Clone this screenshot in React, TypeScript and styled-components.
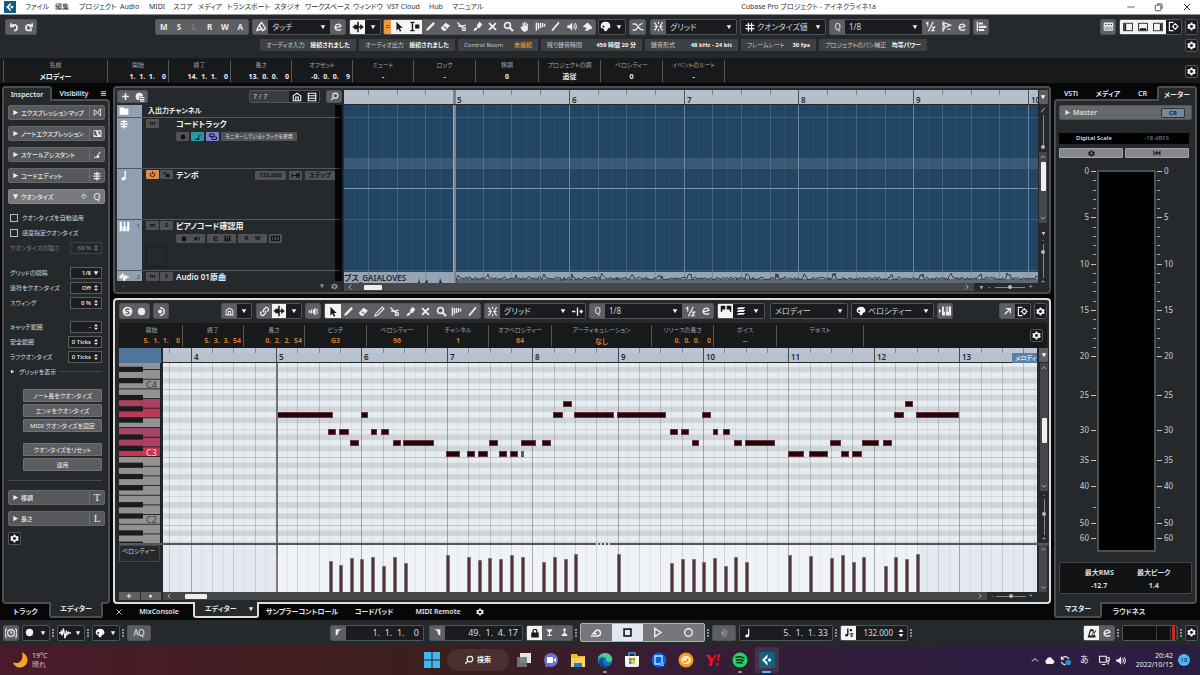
import React from 'react';
import styled, { createGlobalStyle, css } from 'styled-components';

const c = {
  panel: '#25292c',
  line: '#4c4e53',
  field: '#1b1c1f',
  info: '#18191b',
  grey: '#5d5f63',
  text: '#dcdddf',
  orange: '#cf7a2c',
};

const GlobalStyle = createGlobalStyle`
  * { box-sizing: border-box; }
  body { margin: 0; background: #070708; }
  body, button, input, select {
    font-family: "Noto Sans", "Noto Sans CJK JP", sans-serif;
    font-feature-settings: "palt";
    font-size: 7px;
    line-height: 10px;
    color: ${c.text};
  }
  button, input, select { margin: 0; padding: 0; border: 0; background: none; border-radius: 0; outline: 0; }
  select { appearance: none; }
  svg { display: block; flex: none; }
`;

/* ---------- icons ---------- */

const s = { fill: 'none', stroke: 'currentColor', strokeWidth: 2 } as const;
const f = { fill: 'currentColor' } as const;

const glyphs: Record<string, React.ReactNode> = {
  undo: <g {...s} strokeWidth={2.600}><path d="M3 2v5h5" /><path d="M3.500 7C6 3 13 4 13 9c0 3-2.500 4.500-5 4.500" /></g>,
  redo: <g {...s} strokeWidth={2.600}><path d="M13 2v5H8" /><path d="M12.500 7C10 3 3 4 3 9c0 3 2.500 4.500 5 4.500h3V9" /></g>,
  auto: <g {...s} strokeWidth={1.800}><path d="M2 13L6 5l3-3 5 8-4 3-4-8M2 13l8-3" /></g>,
  e: <path {...s} strokeWidth={2.200} d="M4 9.500L12.500 7C12 2 5 2.500 3.500 7.500c-1 5 5 7.500 9.500 4" />,
  autoscroll: <g {...f}><path d="M7 1h2v14H7zM1 7h14v2H1zM11 4l4.500 4L11 12zM3 5h4v6H3z" /></g>,
  arrow: <path {...f} d="M5 1v13l3-3 2 4.500 2-1L10 10h4z" />,
  range: <g {...f}><path d="M2 1h6v2H6v10h2v2H2v-2h2V3H2zM9 5h6v6H9z" /></g>,
  pencil: <path {...f} d="M1.500 14.500l1.500-4L12 1.500l2.500 2.500-9 9z" />,
  brush: <path {...s} strokeWidth={1.600} d="M1.500 14.500l1.500-4L12 1.500l2.500 2.500-9 9z" />,
  eraser: <path {...f} d="M1 10l7-7.500 6.500 4L8 14H4.500z M5 9l4 3 1-1.200-4-3z" fillRule="evenodd" />,
  scissors: <g {...s} strokeWidth={2}><path d="M2 2l7 7M14 6L7 8" /><circle cx="11.500" cy="11.500" r="2.200" /><path d="M3 7l5 1" /></g>,
  glue: <path {...f} d="M2 15l2-5 4-1-1-3 4-5 4 4-4 5-3 0-1 3z" />,
  x: <path {...s} strokeWidth={2.800} d="M3 3l10 10M13 3L3 13" />,
  zoom: <g {...s} strokeWidth={2.400}><circle cx="6.500" cy="6.500" r="4.300" /><path d="M9.500 9.500l5 5" strokeWidth={3} /></g>,
  hand: <path {...f} d="M3 8l2 1V3h1.500v4h.7V1.500h1.600V7h.7V2h1.500v5.500h.7V4H13v7c0 3-2 4.500-4.500 4.500S4.500 14 2 9z" />,
  comp: <g {...f}><path d="M1 2h2v12H1zM4 3h2v9H4zM7 3h2v7H7zM10 3h2v6h-2zM13 4h2v4h-2z" /></g>,
  line: <path {...s} strokeWidth={2.400} d="M3 14L13 2" />,
  speaker: <g><path {...f} d="M2 6h3l4-4v12l-4-4H2z" /><path {...s} strokeWidth={1.500} d="M11 5c1.500 2 1.500 4 0 6M13 3c2.500 3 2.500 7 0 10" /></g>,
  feedback: <g {...f}><path d="M1 6h2v4H1zM4 5h2v6H4zM7 6l4-4v12L7 10zM12.500 4H14v8h-1.500z" /></g>,
  paint: <path {...f} d="M1 8l7-6 6 6 1 5-2-2-5 3H4l3-4z" />,
  palette: <path {...f} d="M8 1c5 0 7 3 7 6.500 0 2-1 3-3 3-1 0-1 4-4 4.500-2 0-2-3-3-4C2 11 1 9.500 1 7.500 1 3 4 1 8 1zM5 6.500A1.500 1.500 0 1 0 5 9.500 1.500 1.500 0 0 0 5 6.500z" fillRule="evenodd" />,
  fade: <g {...s} strokeWidth={1.700}><path d="M1 4h3c4 0 4 8 11 8M1 12h3c2 0 3-2 4-4M9 6l5-3" /></g>,
  snap: <g {...s} strokeWidth={1.800}><path d="M8 1v3.500M8 11.500V15M2 2l4 6-4 6M14 2l-4 6 4 6M6 8H2M10 8h4" /></g>,
  hash: <path {...s} d="M5.500 1v14M10.500 1v14M1 5.500h14M1 10.500h14" />,
  iter: <g {...s} strokeWidth={1.800}><path d="M1.500 4L4 2v6M12 1L5 15M10 9h4l-4 5h4" /></g>,
  tri: <g {...s} strokeWidth={1.700}><path d="M3 2v12l3-5zM3 2l11 4-8 3zM9 12h5" /></g>,
  align: <g {...f}><path d="M1 1h2v14H1zM4 2h6v3H4zM4 7h11v3H4zM4 11.500h8v3H4z" /></g>,
  mixer: <g><rect {...f} x="1" y="2" width="14" height="12" rx="1" /><path d="M3 5h2M7 5h2M11 5h2" stroke="#333" strokeWidth="1.500" /><path d="M2 8h12v5H2z" fill="#9db6cf" /></g>,
  zoneL: <g><rect {...s} strokeWidth={1.400} x="1" y="2" width="14" height="12" /><path {...f} d="M2 3h3v10H2z" /></g>,
  zoneB: <g><rect {...s} strokeWidth={1.400} x="1" y="2" width="14" height="12" /><path {...f} d="M3 10h10v3H3z" /></g>,
  zoneR: <g><rect {...s} strokeWidth={1.400} x="1" y="2" width="14" height="12" /><path {...f} d="M11 3h3v10h-3z" /></g>,
  setup: <g {...s} strokeWidth={1.700}><path d="M8 2H2v12h6" /><circle cx="10.500" cy="8" r="3" /><path d="M10.500 3v2M10.500 11v2M5.500 8h2M13.500 8h2" /></g>,
  gear: <path {...f} fillRule="evenodd" d="M6.500 1h3l.5 2 2 1.200 2-.6 1.500 2.600L14 8l1.500 1.800-1.500 2.600-2-.6L10 13l-.5 2h-3L6 13l-2-1.200-2 .6L.5 9.800 2 8 .5 6.200 2 3.600l2 .6L6 3zM8 5.400A2.600 2.600 0 1 0 8 10.600 2.600 2.600 0 0 0 8 5.400z" />,
  down: <path {...f} d="M2 3h12L8 14z" />,
  right: <path {...f} d="M3 2l11 6-11 6z" />,
  plus: <path {...s} strokeWidth={2.800} d="M8 2v12M2 8h12" />,
  presets: <g {...f}><path d="M7 1a6 6 0 1 0 0 12V7h6A6 6 0 0 0 7 1z" /><path d="M8 8h7v2H8zM8 11h7v2H8zM8 14h7v1.500H8z" /></g>,
  house: <g {...s} strokeWidth={1.800}><path d="M2 14V6l6-4 6 4v8zM6 8v5M10 8v5M5 8h6" /></g>,
  list: <g {...s} strokeWidth={1.800}><path d="M2 2h12v12H2zM2 6h12M2 10h12" /></g>,
  find: <g {...s}><circle cx="9.500" cy="6.500" r="4.500" /><path d="M6.500 9.500L2 14" /></g>,
  folder: <path {...f} d="M1 2h6l1.500 2H15v10H1z" />,
  chord: <g {...f}><path d="M7 1h2v14H7zM3 3h10v2H3zM2 7h12v2H2zM3 11h10v2H3z" /></g>,
  note: <path {...f} d="M8 1h2v11c0 2-2 3-4 3s-3-2-2-3.500S7 10 8 10z" />,
  piano: <path {...f} d="M1 1h3v7h1v7H1zM6 8h1V1h2v7h1v7H6zM12 1h3v14h-4V8h1z" />,
  wave: <path {...s} strokeWidth={1.800} d="M0 8h2l1-2 1 5 2-9 2 13 2-10 1 5 2-3 1 1h2" />,
  bow: <g {...s} strokeWidth={1.600}><path d="M2 3v10l6-5zM8 8l5-6v12zM13 2l2-1" /></g>,
  noteExp: <path {...f} fillRule="evenodd" d="M1 2h14v12H1zM2 3v7l5 3h1L5 4zM8 4l5 8V5z" />,
  scale: <g><path {...s} d="M2 13h4l7-10" strokeWidth={1.800} /><circle {...f} cx="9" cy="12" r="2.200" /></g>,
  mini: <path {...s} strokeWidth={1.700} d="M8 2L4 7l4 6 5-5-2-5-4 3" />,
  dot: <circle {...f} cx="8" cy="8" r="6.500" />,
  solo: <g><circle {...f} cx="8" cy="8" r="7" /><path d="M11 5.500C9.500 3.500 5 4 5.500 6.500 6 8.500 10.500 7.500 10.500 9.800 10 12.500 6 12 5 10.500" fill="none" stroke="#55575b" strokeWidth="1.800" /></g>,
  input: <g><path {...s} strokeWidth={2.200} d="M6 2.500a6 5.500 0 1 1 0 11" /><circle {...f} cx="6" cy="8" r="3" /></g>,
  link: <g {...s}><path d="M7 9a3 3 0 0 1 0-4l2.500-2.500a3 3 0 0 1 4 4L12 8M9 7a3 3 0 0 1 0 4l-2.500 2.500a3 3 0 0 1-4-4L4 8" /></g>,
  nudge: <g {...s}><path d="M8 2v12M0 8h5M11 8h5M13.500 5.500v5" /></g>,
  parts: <g {...f}><path d="M1 1h6v5H3v3H1zM9 1h6v8h-2V6H9z" /></g>,
  layers: <g {...f}><path d="M4 2h11l-3 3H1zM4 6.500h11l-3 3H1zM4 11h11l-3 3H1z" /></g>,
  keysIn: <g {...f}><path d="M0 5l3 3-3 3zM4 2h2.500v7H8v5H4zM9 2h1v7h1V2h1v7h1V2h3v12H9z" /></g>,
  expand: <path {...s} strokeWidth={2.400} d="M3 13L13 3M5 3h8v8" />,
  rewind: <path {...f} d="M1 3h2v10H1zM9 3v10L3.500 8zM15 3v10L9.500 8z" />,
  menu: <path {...s} d="M2 4h12M2 8h12M2 12h12" />,
  power: <g {...s}><path d="M5 4a5 5 0 1 0 6 0M8 1v6" /></g>,
  lockOpen: <path {...f} d="M6 7h9v7H6V6C6 3 2 3 2 6v2H0V6c0-5 8-5 8 0z" />,
  lock: <path {...f} fillRule="evenodd" d="M2 7h2V5c0-5 8-5 8 0v2h2v8H2zM6 7h4V5c0-2.500-4-2.500-4 0z" />,
  link2: <g {...s}><path d="M2 4v8M2 8h7M10 5h5v6h-5zM10 8h5" /></g>,
  blocks: <g {...s} strokeWidth={1.800}><path d="M1 2h9v5H1zM6 7v6h9V8h-5" /></g>,
  bars: <g {...s}><path d="M1 4h14v8H1zM5 4v8M10 4v8" /></g>,
  locL: <path {...f} d="M3 2h11L9 5 6 13H3z" />,
  locR: <path {...f} d="M13 2H2l5 3 3 8h3z" />,
  punchIn: <path {...f} d="M3 2h10v2L9 8v4h3v2H4v-2h3V8L3 4z" />,
  punchOut: <path {...f} d="M8 1a2 2 0 0 1 1 4v4l4 3v2H3v-2l4-3V5a2 2 0 0 1 1-4z" />,
  cycle: <path {...s} d="M1 12h9c6 0 5-9-1-8L4 9h5" strokeWidth={2} />,
  stop: <rect {...s} x="3" y="3" width="10" height="10" strokeWidth={2.400} />,
  play: <path {...s} d="M4 2l9 6-9 6z" />,
  rec: <circle {...s} cx="8" cy="8" r="5.500" />,
  clock: <g {...s} strokeWidth={1.600}><circle cx="8" cy="8" r="4.500" /><path d="M8 5v3h2M2 2C-.5 6 0 11 2 14M14 2c2.500 4 2 9 0 12" /></g>,
  tempo: <g {...f}><path d="M6 2h2v9c0 3-5 4-5 1 0-2 2-2 3-2zM10 3h3v3h-3zM10 9h5v2h-5zM11 12h3v2h-3z" /></g>,
  metro: <path {...f} fillRule="evenodd" d="M5 2h5l4 13H1zM6 5l-2 7h3l3-6-1-1zM8 12l6-9 1 1-5 8z" />,
  updown: <g {...f}><path d="M8 0l5 6H3zM8 16l5-6H3z" /></g>,
  chevL: <path {...s} d="M11 2L5 8l6 6" />,
  chevR: <path {...s} d="M5 2l6 6-6 6" />,
  chevU: <path {...s} d="M2 11l6-6 6 6" />,
  chevD: <path {...s} d="M2 5l6 6 6-6" />,
  min: <path {...s} strokeWidth={1.200} d="M2 8h12" />,
  restore: <g {...s} strokeWidth={1.400}><rect x="2" y="5" width="9" height="9" rx="2" /><path d="M5 3h6a2 2 0 0 1 2 2v6" /></g>,
  close: <path {...s} strokeWidth={1.600} d="M3 3l10 10M13 3L3 13" />,
};

const Icon = ({ n, size = 12 }: { n: string; size?: number }) => (
  <svg width={size} height={size} viewBox="0 0 16 16" aria-hidden="true">{glyphs[n]}</svg>
);

/* ---------- shared parts ---------- */

const Page = styled.div`
  min-height: 100vh;
  display: flex;
  flex-direction: column;
  overflow: hidden;
`;

const Spring = styled.span`flex: 1 1 0;`;

const tones = {
  grey: css`background: ${c.grey}; color: #ececec;`,
  dark: css`background: ${c.field}; color: #f2f2f2;`,
  light: css`background: #f4f4f4; color: #17181a;`,
  orange: css`background: #f09a3e; color: #17181a;`,
};
type Tone = keyof typeof tones;

const Group = styled.div<{ $w: number; $gap?: number }>`
  display: flex;
  flex: none;
  width: ${p => p.$w}px;
  height: 16px;
  margin-left: ${p => p.$gap ?? 3}px;
  border: 1px solid #505358;
  border-radius: 2px;
  overflow: hidden;
`;

const Cell = styled.button<{ $w?: number; $tone?: Tone }>`
  flex: ${p => (p.$w ? `0 0 ${p.$w}px` : '1 1 0')};
  min-width: 0;
  display: flex;
  align-items: center;
  justify-content: center;
  font-size: 8px;
  ${p => tones[p.$tone ?? 'grey']}
`;

const LetterCell = styled(Cell)<{ $off?: boolean }>`
  font-weight: 700;
  ${p => p.$off && 'color: #808286;'}
`;

const SelectBox = styled.span`
  flex: 1 1 0;
  min-width: 0;
  display: flex;
  align-items: center;
  gap: 2px;
  padding: 0 4px;
  background: ${c.field};
  color: #f2f2f2;
  select { flex: 1 1 0; min-width: 0; width: 0; height: 14px; font-size: 8px; color: #d4d6d8; }
`;

const Picker = ({ label, value, icon }: { label: string; value: string; icon?: string }) => (
  <SelectBox>
    {icon && <Icon n={icon} size={10} />}
    <select aria-label={label}><option>{value}</option></select>
    <Icon n="down" size={6} />
  </SelectBox>
);

const SquareButton = styled.button`
  width: 13px;
  height: 13px;
  flex: none;
  display: flex;
  align-items: center;
  justify-content: center;
  border: 1px solid #505358;
  border-radius: 2px;
  background: #191a1c;
  color: #f0f0f0;
`;

/* ---------- menu bar ---------- */

const MenuBar = styled.header`
  height: 15px;
  display: flex;
  align-items: center;
  background: #fff;
  border-bottom: 1px solid #8f9193;
  padding: 0 8px 0 4px;
  color: #333;
  svg { color: #333; }
`;
const Menus = styled.nav`display: flex; flex: 1 1 0; padding-left: 9px;`;
const MenuItem = styled.button<{ $w: number }>`
  width: ${p => p.$w}px;
  flex: none;
  text-align: left;
  white-space: nowrap;
  color: #333;
`;
const Title = styled.h1`margin: 0; font-size: 7px; font-weight: 400; white-space: nowrap;`;
const WindowButtons = styled.div`
  width: 316px;
  display: flex;
  justify-content: flex-end;
  gap: 18px;
`;
const Logo = styled.span`
  width: 12px; height: 12px; background: #145c80; display: flex; align-items: center; justify-content: center;
`;

const CubaseMark = ({ size }: { size: number }) => (
  <svg width={size} height={size} viewBox="0 0 16 16" aria-hidden="true">
    <path d="M9 1L2 8l7 7v-4L6 8l3-3z" fill="#fff" /><path d="M11 5.500l3 2.500-3 2.500L8.500 8z" fill="#fff" />
  </svg>
);

const menus: [string, number][] = [
  ['ファイル', 30], ['編集', 24], ['プロジェクト', 41], ['Audio', 29], ['MIDI', 24], ['スコア', 25], ['メディア', 29],
  ['トランスポート', 47], ['スタジオ', 31], ['ワークスペース', 48], ['ウィンドウ', 34], ['VST Cloud', 42], ['Hub', 23], ['マニュアル', 40],
];

/* ---------- project toolbar ---------- */

const Toolbar = styled.div<{ $h: number; $pad: string }>`
  height: ${p => p.$h}px;
  flex: none;
  display: flex;
  align-items: center;
  padding: ${p => p.$pad};
  background: ${c.panel};
`;

const Chips = styled.div`
  display: flex;
  align-items: center;
  gap: 3px;
  flex: 1 1 0;
  padding-left: 256px;
`;
const Chip = styled.button<{ $w: number; $warn?: boolean }>`
  width: ${p => p.$w}px;
  height: 12px;
  flex: none;
  display: flex;
  align-items: center;
  justify-content: space-between;
  padding: 0 6px;
  background: #3d4144;
  color: #c6c8ca;
  font-size: 6px;
  white-space: nowrap;
  b { color: ${p => (p.$warn ? '#e08a33' : '#f2f2f2')}; }
`;
const chips: [string, string, number][] = [
  ['オーディオ入力', '接続されました', 96], ['オーディオ出力', '接続されました', 96], ['Control Room', '未接続', 80],
  ['残り録音時間', '459 時間 20 分', 101], ['録音形式', '48 kHz - 24 bit', 93], ['フレームレート', '30 fps', 75],
  ['プロジェクトのパン補正', '均等パワー', 108],
];

const InfoLine = styled.div`
  height: 25px;
  flex: none;
  display: flex;
  align-items: center;
  background: ${c.info};
  padding: 2px 2px 1px 3px;
`;
const InfoCell = styled.label<{ $w: number; $num?: boolean; $accent?: boolean }>`
  width: ${p => p.$w}px;
  height: 22px;
  flex: none;
  display: flex;
  flex-direction: column;
  border-right: 1px solid #55585b;
  text-align: center;
  white-space: nowrap;
  span { font-size: 6px; line-height: 10px; color: #a0a2a5; }
  input {
    width: 100%;
    height: 12px;
    padding-right: ${p => (p.$num ? 2 : 0)}px;
    font-size: 7px;
    font-weight: 700;
    text-align: ${p => (p.$num ? 'right' : 'center')};
    color: ${p => (p.$accent ? c.orange : '#ececec')};
  }
`;
const InfoStart = styled.span`width: 1px; height: 22px; background: #55585b;`;

const Fields = ({ items, accent }: { items: [string, string, number, boolean?][]; accent?: boolean }) => (
  <>
    {items.map(([label, value, w, num]) => (
      <InfoCell key={label} $w={w} $num={num} $accent={accent}>
        <span>{label}</span>
        <input readOnly value={value} />
      </InfoCell>
    ))}
  </>
);

const projectInfo: [string, string, number, boolean?][] = [
  ['名前', 'メロディー', 104], ['開始', '1.  1.  1.    0', 61, true], ['終了', '14.  1.  1.    0', 62, true],
  ['長さ', '13.  0.  0.    0', 61, true], ['オフセット', '-0.  0.  0.    9', 61, true], ['ミュート', '-', 61], ['ロック', '-', 62],
  ['移調', '0', 63], ['プロジェクトの調', '追従', 62], ['ベロシティー', '0', 62], ['イベントのルート', '-', 62],
];

/* ---------- zones ---------- */

const Workspace = styled.main`
  flex: 1 1 auto;
  display: grid;
  grid-template-columns: 108px minmax(0, 1fr) 143px;
  gap: 3px;
  padding: 3px 3px 0 2px;
`;
const Zone = styled.section`display: flex; flex-direction: column; min-width: 0;`;
const Panel = styled.div<{ $active?: boolean; $fill?: boolean }>`
  border: 2px solid ${p => (p.$active ? '#dcdcdc' : c.line)};
  border-radius: 4px;
  background: ${c.panel};
  ${p => p.$fill && 'flex: 1 1 auto;'}
  min-width: 0;
  display: flex;
  flex-direction: column;
`;
const Tabs = styled.div<{ $bottom?: boolean }>`
  height: ${p => (p.$bottom ? 16 : 13)}px;
  flex: none;
  display: flex;
  align-items: flex-start;
`;
const Tab = styled.button<{ $w: number; $on?: boolean; $bottom?: boolean; $active?: boolean; $start?: boolean }>`
  width: ${p => p.$w}px;
  height: 15px;
  flex: none;
  font-size: 7px;
  font-weight: 600;
  color: #e4e4e4;
  white-space: nowrap;
  position: relative;
  z-index: 1;
  display: flex;
  align-items: center;
  justify-content: ${p => (p.$start ? 'space-between' : 'center')};
  padding: ${p => (p.$start ? '0 3px 0 10px' : '0')};
  ${p => p.$on && css`
    background: ${c.panel};
    border: 2px solid ${p.$active ? '#dcdcdc' : c.line};
    ${p.$bottom ? 'border-top: 0; border-radius: 0 0 3px 3px; margin-top: -2px; height: 16px;' : 'border-bottom: 0; border-radius: 3px 3px 0 0;'}
  `}
`;

/* ---------- inspector ---------- */

const Inspector = styled.div`
  flex: 1 1 auto;
  display: flex;
  flex-direction: column;
  padding: 4px 3px 0 4px;
`;
const Sections = styled.div`display: flex; flex-direction: column; gap: 6px;`;
const SectionHead = styled.button<{ $open?: boolean }>`
  height: 15px;
  flex: none;
  display: flex;
  align-items: center;
  gap: 2px;
  padding: 0 0 0 3px;
  border: 1px solid ${p => (p.$open ? '#85878a' : '#66686c')};
  border-radius: 2px;
  background: ${p => (p.$open ? '#77797c' : '#56585c')};
  white-space: nowrap;
  text-align: left;
  color: #ececec;
  > span { flex: 1 1 0; min-width: 0; font-size: 6px; font-weight: 500; }
`;
const SectionIcon = styled.i`
  width: 15px;
  height: 13px;
  border-left: 1px solid #6d6f73;
  display: flex;
  align-items: center;
  justify-content: center;
  font: 400 9px/13px "Noto Sans", sans-serif;
`;
const SerifIcon = styled(SectionIcon)`font: 400 11px/13px "Liberation Serif", serif;`;

const Rows = styled.div<{ $top: number }>`
  margin-top: ${p => p.$top}px;
  display: flex;
  flex-direction: column;
  padding: 0 3px 0 2px;
`;
const Row = styled.label<{ $off?: boolean }>`
  height: 15px;
  display: flex;
  align-items: center;
  font-size: 6px;
  color: ${p => (p.$off ? '#7b7e81' : '#d6d8da')};
  white-space: nowrap;
  > span:first-child { flex: 1 1 0; min-width: 0; }
`;
const Check = styled.input.attrs({ type: 'checkbox' })`
  appearance: none;
  width: 8px;
  height: 8px;
  margin-right: 4px;
  border: 1px solid #b8babc;
`;
const ValueBox = styled.span<{ $w: number; $off?: boolean }>`
  width: ${p => p.$w}px;
  height: 12px;
  display: flex;
  align-items: center;
  gap: 2px;
  padding: 0 2px 0 0;
  border: 1px solid ${p => (p.$off ? '#3f4245' : '#585b5f')};
  background: ${p => (p.$off ? 'transparent' : '#1c1e20')};
  color: ${p => (p.$off ? '#7b7e81' : '#f0f0f0')};
  input, select { flex: 1 1 0; width: 0; min-width: 0; height: 10px; text-align: right; font-size: 6px; font-weight: 500; color: inherit; }
`;
const ActionButton = styled.button`
  height: 13px;
  margin: 0 0 2px 13px;
  border: 1px solid #707276;
  border-radius: 1px;
  background: #5b5d61;
  font-size: 6px;
  color: #ececec;
`;
const Disclosure = styled.button`
  height: 15px;
  display: flex;
  align-items: center;
  gap: 4px;
  font-size: 6px;
  color: #dcdee0;
  &::after { content: ''; flex: 1; height: 1px; background: #45484b; }
`;
const Rule = styled.hr`margin: 7px 3px 9px 0; width: auto; border: 0; height: 1px; background: #484b4e;`;

const Param = ({ label, value, w = 32, off, list }: { label: string; value: string; w?: number; off?: boolean; list?: boolean }) => (
  <Row $off={off}>
    <span>{label}</span>
    <ValueBox $w={w} $off={off}>
      {list ? <select><option>{value}</option></select> : <input readOnly value={value} />}
      <Icon n={list ? 'down' : 'updown'} size={6} />
    </ValueBox>
  </Row>
);

/* ---------- arrangement ---------- */

const ArrangePanel = styled(Panel)`height: 208px; flex: none; flex-direction: row; padding: 2px 1px 1px 2px;`;
const TrackList = styled.div`width: 225px; flex: none; display: flex; flex-direction: column;`;
const TrackHead = styled.div`height: 15px; display: flex; align-items: flex-start;`;
const HeadGroup = styled(Group)`height: 13px;`;
const HeadCount = styled.span`flex: 1 1 0; background: #3b3e41; padding-left: 3px; line-height: 11px; color: #c8cacc;`;

const Track = styled.article<{ $h: number }>`
  height: ${p => p.$h}px;
  flex: none;
  display: flex;
  border-bottom: 1px solid #55585b;
  border-right: 7px solid #050505;
  overflow: hidden;
  &:last-of-type { border-bottom: 0; }
`;
const TrackColor = styled.div`
  width: 25px;
  flex: none;
  display: flex;
  justify-content: space-between;
  padding: 1px 2px 0 2px;
  background: #8fa0b1;
  color: #fff;
  small { font-size: 6px; line-height: 10px; color: #3c4855; }
`;
const TrackBody = styled.div`
  flex: 1 1 0;
  min-width: 0;
  display: grid;
  grid-template-columns: 27px 1fr;
  grid-auto-rows: min-content;
  column-gap: 3px;
  row-gap: 1px;
  padding: 0 0 0 4px;
`;
const TrackTitle = styled.div`
  display: flex;
  align-items: center;
  height: 12px;
  font-size: 8px;
  font-weight: 600;
  white-space: nowrap;
  color: #f0f0f0;
`;
const FolderTitle = styled(TrackTitle)`grid-column: 1 / -1; font-size: 7px; padding-left: 2px;`;
const Minis = styled.div<{ $shift?: boolean }>`display: flex; gap: 2px; padding-top: 1px; ${p => p.$shift && 'grid-column: 2;'}`;
const Mini = styled.button<{ $bg?: string; $w?: number }>`
  width: ${p => p.$w ?? 13}px;
  height: 9px;
  flex: none;
  display: flex;
  align-items: center;
  justify-content: space-evenly;
  background: ${p => p.$bg ?? '#505256'};
  color: #101112;
  border-radius: 1px;
  font-size: 6px;
  line-height: 9px;
  font-weight: 700;
  white-space: nowrap;
`;
const MiniText = styled(Mini)`color: #c8cacc; font-weight: 500; font-size: 5px;`;
const MS = styled(Minis)`gap: 1px;`;
const SmallValue = styled(Mini)`margin-left: 3px; &:first-of-type { margin-left: auto; }`;
const PictureSlot = styled.span`width: 21px; height: 21px; margin-top: 2px; border: 1px solid #1a1c1e;`;
const TrackFoot = styled.div`
  flex: 1 1 0; display: flex; align-items: center; justify-content: flex-end; gap: 6px; padding: 0 4px 0 5px; color: #8a8d90;
`;

const Canvas = styled.div`flex: 1 1 0; min-width: 0; display: flex; flex-direction: column; margin-left: 2px;`;
const Plot = styled.svg<{ $h: number; $grow?: boolean }>`
  width: 100%;
  height: ${p => p.$h}px;
  ${p => p.$grow && `flex: 1 0 ${p.$h}px;`}
  overflow: hidden;
  text { font-family: "Noto Sans", "Noto Sans CJK JP", sans-serif; font-size: 8px; font-weight: 600; fill: #24282c; }
`;
const HScroll = styled.div<{ $lead: number; $thumb: number }>`
  height: 8px;
  flex: none;
  display: flex;
  align-items: center;
  background: #45484a;
  padding-left: 3px;
  &::before { content: ''; order: 1; margin-left: ${p => p.$lead}px; width: ${p => p.$thumb}px; height: 5px; border-radius: 1px; background: #eee; }
`;
const HScrollEnd = styled.span`
  order: 2; margin-left: auto; height: 8px; display: flex; align-items: center; gap: 4px; color: #d0d2d4;
`;
const ZoomStrip = styled.span<{ $w: number }>`
  width: ${p => p.$w}px; height: 8px; display: flex; align-items: center; justify-content: space-around; padding: 0 3px; background: ${c.panel}; color: #a8abae; line-height: 8px;
`;
const ZoomRange = styled.input.attrs({ type: 'range', min: 0, max: 100 })<{ $v?: boolean; $len: number }>`
  appearance: none;
  ${p => (p.$v
    ? `writing-mode: vertical-lr; width: 5px; height: ${p.$len}px; background: linear-gradient(90deg, transparent 2px, #85888b 2px 3px, transparent 3px);`
    : `height: 5px; width: ${p.$len}px; background: linear-gradient(transparent 2px, #85888b 2px 3px, transparent 3px);`)}
  &::-webkit-slider-thumb { appearance: none; width: 4px; height: 4px; border-radius: 2px; background: #b8babc; }
`;
const VRail = styled.div`
  width: 10px; flex: none; display: flex; flex-direction: column; align-items: center; color: #c8cacc;
`;
const RailButton = styled.button`
  width: 9px; height: 14px; flex: none; display: flex; align-items: center; justify-content: center;
  background: ${c.grey}; border-radius: 1px; color: #fff;
`;
const VBar = styled.div<{ $lead: string; $thumb: number }>`
  width: 8px;
  flex: 1 1 0;
  display: flex;
  flex-direction: column;
  align-items: center;
  background: #45484a;
  padding: 2px 0;
  > i { flex: none; margin-top: ${p => p.$lead}; width: 5px; height: ${p => p.$thumb}px; border-radius: 1px; background: #f0f0f0; }
  > svg:last-child { margin-top: auto; }
`;
const VZoom = styled.div<{ $h: number }>`
  height: ${p => p.$h}px; flex: none; display: flex; flex-direction: column; align-items: center; justify-content: center;
  font-size: 6px; line-height: 4px; gap: 2px;
`;

const range = (n: number) => Array.from({ length: n }, (_, i) => i);

const ARR_BAR = 114.8;
const arrX = (bar: number) => Math.round(110 + (bar - 5) * ARR_BAR);

const ArrangeRuler = () => (
  <Plot $h={15} role="img" aria-label="ルーラー">
    <rect width="100%" height="14" fill="#b5bfc9" />
    {range(80).map(i => {
      const major = i % 4 === 0;
      return <rect key={i} x={arrX(4 + i / 4)} y="0" width="1" height={major ? 14 : 5} fill={major ? '#4d5358' : '#788089'} />;
    })}
    {range(20).map(i => <text key={i} x={arrX(5 + i) + 3} y="13">{5 + i}</text>)}
    <rect x="109" width="3" height="14" fill="#808386" />
  </Plot>
);

const wavePath = (() => {
  let seed = 7;
  const rnd = () => { seed = (seed * 16807) % 2147483647; return seed / 2147483647; };
  let d = 'M112 12';
  for (let x = 0; x < 1800; x += 1) {
    const beat = x % 29 < 4 ? 6 : 2;
    d += `L${112 + x} ${(8.5 - rnd() * beat - rnd() * 2).toFixed(1)}`;
  }
  return d + 'L1912 12Z';
})();

const ArrangeCanvas = () => (
  <Plot $h={178} $grow role="img" aria-label="イベントディスプレイ">
    <rect width="100%" height="100%" fill="#224566" />
    <rect y="53" width="100%" height="10" fill="#3a5873" />
    {range(160).map(i => {
      const o = i % 8 === 0 ? 0.42 : i % 2 === 0 ? 0.2 : 0.06;
      return <rect key={i} x={arrX(4 + i / 8)} width="1" height="167" fill="#cfdbe6" opacity={o} />;
    })}
    {[12, 63, 114, 165].map(y => <rect key={y} y={y} width="100%" height="1" fill="#4a6680" opacity=".7" />)}
    <rect y="83" width="100%" height="1" fill="#8192a2" />
    <rect y="167" width="100%" height="11" fill="#94a4b4" />
    {range(80).map(i => <rect key={i} x={arrX(4 + i / 4)} y="167" width="1" height="11" fill="#7f8f9f" />)}
    <g transform="translate(0 167)">
      <rect x="112" y="7" width="100%" height="4" fill="#5c6976" />
      <path d={wavePath} fill="none" stroke="#2a3036" strokeWidth=".9" />
      <path d="M74 11l1-5 1 5M81 11l2-4 1 4M95 11l1-5 2 5" fill="#2a3036" />
    </g>
    <text x="0" y="176">ブス_GAIALOVES</text>
    <rect x="109" width="3" height="178" fill="#808386" />
    <rect x="109" width="1" height="178" fill="#a5a8aa" />
  </Plot>
);

/* ---------- key editor ---------- */

const EditorPanel = styled(Panel)`margin-top: 4px; padding: 3px 0 2px 4px;`;
const EditorInfo = styled(InfoLine)`margin: 4px 2px 0 0; padding: 1px 2px 1px 2px; > button { margin-right: 2px; }`;
const EditorGrid = styled.div`
  flex: 1 1 auto;
  display: grid;
  grid-template-columns: 42px minmax(0, 1fr) 10px;
  grid-template-rows: 15px minmax(180px, 1fr) 2px 47px 8px;
  column-gap: 2px;
`;
const Corner = styled.div`background: #4f759c;`;
const Divider = styled.div`
  grid-column: 1 / -1; background: #55585b; display: flex; justify-content: center;
  &::after { content: ''; width: 14px; margin-left: 38px; border-top: 2px dotted #ccc; }
`;
const LaneHead = styled.div`
  select { width: 41px; height: 17px; border: 1px solid #44474a; font-size: 6px; padding: 0 0 6px 2px; color: #d4d6d8; }
`;
const LaneButtons = styled.div`
  display: grid; grid-template-columns: 1fr 1fr; gap: 1px;
  button { background: ${c.grey}; display: flex; align-items: center; justify-content: center; color: #eee; height: 8px; }
`;

const BAR = 85.4;
const BAR5 = 113;
const SEMI = 5.64;
const C3 = 94;
const keyX = (bar: number) => Math.round(BAR5 + (bar - 5) * BAR);
const isBlack = (n: number) => [1, 3, 6, 8, 10].includes(((n % 12) + 12) % 12);

const RulerTag = styled.text`&& { fill: #d8e4f0; font-size: 6px; font-feature-settings: "palt"; }`;

const EditorRuler = () => (
  <Plot $h={15} role="img" aria-label="エディタールーラー">
    <rect width="100%" height="5" fill="#bdc4d3" />
    <rect y="5" width="100%" height="9" fill="#b5c1cd" />
    {range(80).map(i => {
      const bar = 3.5 + i / 4;
      const major = Number.isInteger(bar);
      return <rect key={i} x={keyX(bar)} width="1" height={major ? 14 : 5} fill={major ? '#43484d' : '#7f868f'} />;
    })}
    {range(18).map(i => <text key={i} x={keyX(4 + i) + 3} y="12">{4 + i}</text>)}
    <svg x="100%" overflow="visible">
      <rect x="-25" y="5" width="25" height="10" fill="#5a80a6" />
      <RulerTag x="-22" y="12">メロディ</RulerTag>
    </svg>
  </Plot>
);

const keyTint: Record<number, string> = { 0: '#c43650', 1: '#ad4060', 2: '#a14468', 4: '#bb3a55', 5: '#ab4060' };
const KeyName = styled.text<{ $on: boolean }>`&& { font-size: 9px; font-weight: 400; fill: ${p => (p.$on ? '#f2dbe0' : '#3b3c3e')}; }`;

const Keyboard = () => (
  <Plot $h={180} $grow role="img" aria-label="鍵盤">
    <rect width="100%" height="100%" fill="#1b1c1e" />
    {range(52).map(i => {
      const k = i - 40;
      const top = C3 - ((k + 1) * SEMI * 12) / 7;
      return <rect key={k} y={top} width="41" height="8.800" fill={keyTint[k] ?? '#929292'} />;
    })}
    {range(90).map(i => i - 66).filter(isBlack).map(n => (
      <rect key={n} y={C3 - (n + 1) * SEMI} width="24" height="5.200" fill="#1a1b1d" />
    ))}
    {([['C4', 25], ['C3', 93], ['C2', 160]] as [string, number][]).map(([t, y]) => (
      <KeyName key={t} x="27" y={y} $on={t === 'C3'}>{t}</KeyName>
    ))}
  </Plot>
);

const notes: Record<number, [number, number][]> = {
  9: [[287, 8], [629, 7]],
  7: [[1, 55], [85, 6], [277, 9], [298, 39], [341, 48], [426, 8], [618, 9], [640, 42]],
  4: [[52, 7], [63, 9], [95, 5], [105, 7], [394, 7], [405, 7], [437, 4], [447, 6]],
  2: [[74, 8], [117, 7], [127, 30], [213, 8], [245, 14], [266, 8], [416, 6], [458, 7], [469, 29], [554, 10], [586, 16], [607, 8]],
  0: [[170, 13], [191, 7], [202, 9], [223, 7], [234, 7], [512, 15], [533, 18], [565, 7], [576, 9]],
};

const GridLines = ({ strong }: { strong?: boolean }) => (
  <>
    {range(160).map(i => {
      const bar = 3.5 + i / 8;
      const major = Number.isInteger(bar);
      const beat = i % 2 === 0;
      return (
        <rect key={i} x={keyX(bar)} width="1" height="100%" fill="#5c6268"
          opacity={major ? 0.5 : beat ? (strong ? 0.22 : 0.3) : 0.09} />
      );
    })}
  </>
);

const PianoRoll = () => (
  <Plot $h={180} $grow role="img" aria-label="ノートディスプレイ">
    <rect width="100%" height="100%" fill="#e7ecf0" />
    {range(90).map(i => i - 66).filter(isBlack).map(n => (
      <rect key={n} y={C3 - (n + 1) * SEMI} width="100%" height="5.600" fill="#d0d5d9" />
    ))}
    {range(10).map(i => (
      <g key={i}>
        <rect y={Math.round(C3 + (i - 3) * SEMI * 12)} width="100%" height="1" fill="#bcc2c6" />
        <rect y={Math.round(C3 + (i - 3) * SEMI * 12 - SEMI * 5)} width="100%" height="1" fill="#d5dade" />
      </g>
    ))}
    <GridLines />
    {Object.entries(notes).map(([n, list]) => list.map(([x, w]) => (
      <rect key={`${n}-${x}`} x={BAR5 + x + 0.5} y={Math.round(C3 - (Number(n) + 1) * SEMI) + 0.5} width={w} height="5"
        fill="#250109" stroke="#6b3540" />
    )))}
    <rect x={BAR5 + 245} y="88" width="3" height="6" fill="#565a7c" />
    <rect x={BAR5} width="2" height="100%" fill="#6f7375" />
  </Plot>
);

const velocities: [number, number][] = [
  [2, 35], [55, 30], [65, 26], [76, 33], [86, 32], [97, 34], [108, 25], [119, 34], [130, 28], [172, 36], [193, 34], [204, 31],
  [214, 33], [225, 32], [236, 36], [247, 34], [268, 29], [279, 34], [290, 32], [300, 37], [343, 37], [396, 28], [407, 32],
  [418, 32], [428, 29], [439, 33], [450, 25], [460, 34], [471, 29], [514, 36], [535, 35], [556, 33], [567, 36], [578, 29],
  [588, 34], [610, 25], [620, 34], [631, 32], [642, 37],
];

const VelocityLane = () => (
  <Plot $h={47} role="img" aria-label="ベロシティーレーン">
    <rect width="100%" height="47" fill="#e4eaef" />
    <rect x={BAR5} width="643" height="47" fill="#f0f3f5" />
    <GridLines strong />
    <rect x={BAR5} width="2" height="47" fill="#6f7375" />
    {velocities.map(([x, h]) => (
      <rect key={x} x={BAR5 + x - 1.5} y={46.5 - h} width={x < 5 ? 1 : 3} height={h + 1} fill="#4e343d" stroke="#85787f" />
    ))}
  </Plot>
);

const editorInfo: [string, string, number, boolean?][] = [
  ['開始', '5.  1.  1.    0', 62, true], ['終了', '5.  3.  3.  54', 61, true], ['長さ', '0.  2.  2.  54', 61, true], ['ピッチ', 'G3', 62],
  ['ベロシティー', '96', 61], ['チャンネル', '1', 61], ['オフベロシティー', '64', 63], ['アーティキュレーション', 'なし', 100],
  ['リリースの長さ', '0.  0.  0.    0', 62, true], ['ボイス', '--', 63], ['テキスト', '', 87],
];

/* ---------- meter ---------- */

const MeterPanel = styled(Panel)`padding: 4px 3px 8px 3px;`;
const MasterBar = styled.div`
  height: 15px; flex: none; display: flex; align-items: center; gap: 2px; padding: 0 6px 0 4px;
  background: #66686b; border: 1px solid #505357; border-radius: 2px; font-size: 7px; font-weight: 600;
  button { margin-left: auto; width: 24px; height: 10px; border: 1px solid #2c333a; border-radius: 2px; background: #78899b; color: #18202a; font-size: 6px; line-height: 8px; font-weight: 700; }
`;
const ScaleStrip = styled.div`
  margin: 13px 3px 4px 0; height: 11px; flex: none; background: #000; display: flex; justify-content: space-between;
  padding: 0 20px 0 17px; font-size: 6px; line-height: 11px; font-weight: 600;
  span { color: #56708c; }
`;
const PairButtons = styled.div`
  display: grid; grid-template-columns: 1fr 1fr; gap: 2px; margin-right: 3px; flex: none;
  button { height: 10px; background: #85878a; border: 1px solid #a2a4a6; border-radius: 1px; display: flex; align-items: center; justify-content: center; color: #151617; }
`;
const MeterPlot = styled.svg`
  margin: 9px auto 0;
  text { font-family: "Noto Sans", sans-serif; font-size: 8px; font-weight: 500; fill: #babcbe; }
`;
const Readout = styled.dl`
  margin: auto 0 0; height: 32px; flex: none; border: 1px solid #43464a; border-radius: 2px; background: #111314;
  display: grid; grid-template-columns: 1fr 1fr; text-align: center; padding: 5px 10px 0 12px; font-weight: 700;
  dt, dd { margin: 0; line-height: 10px; }
`;
const marks: [number, number][] = [
  [0, 4], [5, 50], [10, 97], [15, 143], [20, 189], [25, 228], [30, 263], [35, 293], [40, 319], [50, 356], [60, 371],
];

const Meter = () => (
  <MeterPlot width="110" height="388" viewBox="0 0 110 388" role="img" aria-label="マスターメーター">
    <rect x="27" y="4" width="57" height="380" fill="#000" stroke="#4d5053" strokeWidth="2" />
    {marks.map(([db, y]) => (
      <g key={db}>
        <rect x="20" y={y} width="5" height="1" fill="#c5c7c9" />
        <rect x="86" y={y} width="5" height="1" fill="#c5c7c9" />
        <text x="18" y={y + 3} textAnchor="end">{db}</text>
        <text x="93" y={y + 3}>{db}</text>
      </g>
    ))}
    {range(19).filter(i => (i + 1) % 5).map(i => (
      <g key={i} fill="#a0a3a6">
        <rect x="22" y={Math.round(4 + (i + 1) * 9.25)} width="3" height="1" />
        <rect x="86" y={Math.round(4 + (i + 1) * 9.25)} width="3" height="1" />
      </g>
    ))}
    <path d="M22 340.500h3M86 340.500h3" stroke="#a0a3a6" />
  </MeterPlot>
);

/* ---------- transport ---------- */

const Transport = styled.footer`
  height: 25px; flex: none; display: flex; align-items: center; background: ${c.panel}; padding: 0 2px 0 0;
`;
const Dots = styled.span`width: 2px; height: 8px; flex: none; margin-left: 2px; border-left: 2px dotted #8d9093;`;
const TimeInput = styled.input<{ $small?: boolean }>`
  flex: 1 1 0; min-width: 0; width: 0; background: ${c.field}; text-align: right;
  padding-right: ${p => (p.$small ? 2 : 4)}px; font-size: ${p => (p.$small ? 8 : 9)}px; color: #d8dadc;
`;
const TransportKeys = styled.div`
  width: 125px; height: 19px; flex: none; margin-left: 3px; display: grid; grid-template-columns: repeat(4, 1fr);
  border: 1px solid #b0b2b4; border-radius: 2px; background: #75777a;
`;
const TransportKey = styled.button<{ $on?: boolean }>`
  display: flex; align-items: center; justify-content: center; color: ${p => (p.$on ? '#191a1c' : '#f0f0f0')};
  background: ${p => (p.$on ? '#e3e7f1' : 'transparent')};
`;
const FadedCell = styled(Cell)`color: #8f9194;`;
const LevelMeter = styled.div`
  width: 56px; height: 16px; margin-left: 3px; flex: none; display: grid; grid-template-columns: 34px 13px 3px 1fr; gap: 1px;
  border: 1px solid #505358; background: #0e0f10; border-radius: 2px;
  i { border-right: 1px solid #3a3d40; }
  i:nth-child(3) { background: #c8281e; border: 0; }
`;

/* ---------- desktop taskbar ---------- */

const Taskbar = styled.footer`
  height: 30px; flex: none; display: grid; grid-template-columns: 1fr auto 1fr; align-items: center;
  padding: 0 10px 0 12px;
  background: linear-gradient(90deg, #4a1a2a 0%, #431d22 22%, #3b1f1d 38%, #381d35 55%, #2f1d40 80%, #2a1d42 100%);
  color: #f0eef0;
`;
const Weather = styled.button`
  display: flex; align-items: center; gap: 4px; text-align: left; line-height: 9px; width: max-content;
  small { display: block; font-size: 7px; color: #c8bcc2; }
`;
const Apps = styled.div`display: flex; align-items: center; gap: 3px; margin-right: 4px;`;
const AppButton = styled.button<{ $on?: boolean; $run?: boolean }>`
  width: 24px; height: 26px; display: flex; flex-direction: column; align-items: center; justify-content: flex-end;
  border-radius: 3px; background: ${p => (p.$on ? 'rgba(255,255,255,.09)' : 'none')};
  &::after { content: ''; height: 2px; margin-top: 3px; border-radius: 1px; width: ${p => (p.$on ? 9 : 4)}px; background: ${p => (p.$on ? '#4cc2ff' : p.$run ? '#9a949c' : 'transparent')}; }
`;
const SearchPill = styled.button`
  width: 62px; height: 22px; border-radius: 11px; background: rgba(255,255,255,.08);
  display: flex; align-items: center; justify-content: center; gap: 3px; font-weight: 600; color: #f0eef0;
`;
const Tray = styled.div`display: flex; align-items: center; justify-content: flex-end; gap: 5px;`;
const Ime = styled.button`font-size: 9px; padding: 0 4px; color: #f0eef0;`;
const Clock = styled.div`text-align: right; line-height: 9px; margin-left: 5px;`;
const Badge = styled.span`
  width: 12px; height: 12px; border-radius: 6px; background: #4cb4ee; color: #123; font-size: 6px; line-height: 12px; text-align: center;
`;

const Svg = ({ children }: { children: React.ReactNode }) => (
  <svg width="16" height="16" viewBox="0 0 16 16" aria-hidden="true">{children}</svg>
);

const appIcons: [string, React.ReactNode, string?][] = [
  ['タスクビュー', <><rect x="4" y="1" width="11" height="10" fill="#e4e4e6" /><rect x="1" y="5" width="10" height="10" fill="#77787c" opacity=".9" /></>],
  ['チャット', <><circle cx="8" cy="8" r="7" fill="#6d6fd4" /><path d="M2 15l1-5 4 4z" fill="#6d6fd4" /><rect x="4" y="5" width="6" height="6" rx="1" fill="#fff" /><path d="M10.500 8L13 5.500v5z" fill="#fff" /></>],
  ['エクスプローラー', <><path d="M1 2h6l1 2h7v11H1z" fill="#f5b82e" /><path d="M1 6h14v9H1z" fill="#ffd35c" /><path d="M4 11h8v4H4z" fill="#1a7fd4" /></>],
  ['Edge', <><circle cx="8" cy="8" r="7.300" fill="#1673c4" /><path d="M1 7C2 0 14-1 15.300 7c0 3-5 4-6 1.500C10 5 5 3 1 7z" fill="#4dcf8c" /><path d="M7 7c-3 3 0 8 6 6-3 4-11 3-11-3 1-3 3-4 5-3z" fill="#0c4a94" /></>, 'run'],
  ['ストア', <><path d="M5 4V1h6v3" fill="none" stroke="#35a5e5" strokeWidth="1.500" /><path d="M1 4h14v9a2 2 0 0 1-2 2H3a2 2 0 0 1-2-2z" fill="#f4f4f4" /><path d="M5 6h2.700v2.700H5z" fill="#f25022" /><path d="M8.300 6H11v2.700H8.300z" fill="#7fba00" /><path d="M5 9.300h2.700V12H5z" fill="#00a4ef" /><path d="M8.300 9.300H11V12H8.300z" fill="#ffb900" /></>],
  ['モバイル', <><circle cx="8" cy="8" r="7.500" fill="#0a5fe0" /><path d="M4 4h7v8H4z" fill="none" stroke="#cfe4ff" strokeWidth="1.300" /><path d="M9 10h4v4H9z" fill="#52a2ff" /></>],
  ['ブラウザー', <><circle cx="8" cy="8" r="7.500" fill="#f79a1c" /><ellipse cx="8" cy="8" rx="5" ry="4.300" fill="#ffe9b8" /><path d="M5 9.500c3 1 5-1 5-3" fill="none" stroke="#f08010" strokeWidth="1.500" /></>],
  ['Yahoo!', <><path d="M1 3h4l2 4 3-4h2L8 9l-1 5H4l1-5z" fill="#f01020" /><path d="M13 2h2.500l-2 7H12zM11.500 11h2.200l-.6 2.500h-2.200z" fill="#f01020" /></>],
  ['Spotify', <><circle cx="8" cy="8" r="7.500" fill="#1ed760" /><path d="M3.500 5.500c3-1 6.500-.7 9 .8M4 8.200c2.500-.8 5.500-.5 7.600.8M4.500 10.800c2-.6 4.400-.4 6.200.6" fill="none" stroke="#15221a" strokeWidth="1.500" /></>, 'run'],
  ['Cubase', <><rect width="16" height="16" fill="#15607f" /><path d="M8.500 2.500L3 8l5.500 5.500v-3L6 8l2.500-2.500zM10.500 6l2 2-2 2-2-2z" fill="#fff" /></>, 'on'],
];

/* ---------- tool groups ---------- */

const projectTools = ['pencil', 'eraser', 'scissors', 'glue', 'x', 'zoom', 'hand', 'comp', 'line', 'speaker', 'paint'];
const editorTools = ['pencil', 'eraser', 'brush', 'scissors', 'glue', 'x', 'zoom', 'comp', 'line'];

export default function App() {
  return (
    <Page>
      <GlobalStyle />
      <MenuBar>
        <Logo><CubaseMark size={10} /></Logo>
        <Menus>{menus.map(([t, w]) => <MenuItem key={t} $w={w}>{t}</MenuItem>)}</Menus>
        <Title>Cubase Pro プロジェクト - アイネクライネ1a</Title>
        <WindowButtons>
          <button aria-label="最小化"><Icon n="min" size={10} /></button>
          <button aria-label="元に戻す"><Icon n="restore" size={10} /></button>
          <button aria-label="閉じる"><Icon n="close" size={10} /></button>
        </WindowButtons>
      </MenuBar>

      <Toolbar $h={23} $pad="0 2px 0 2px">
        <Group $w={32}><Cell aria-label="取り消し"><Icon n="undo" size={10} /></Cell><Cell aria-label="やり直し"><Icon n="redo" size={10} /></Cell></Group>
        <Group $w={94} $gap={118}>{'MSLRWA'.split('').map(t => <LetterCell key={t} $off={t === 'L'}>{t}</LetterCell>)}</Group>
        <Group $w={94}>
          <Cell $w={15} aria-label="オートメーション"><Icon n="auto" /></Cell>
          <Picker label="オートメーションモード" value="タッチ" />
          <Cell $w={15} aria-label="設定"><Icon n="e" size={10} /></Cell>
        </Group>
        <Group $w={32}><Cell $tone="light" aria-label="自動スクロール"><Icon n="autoscroll" /></Cell><Cell $tone="dark" aria-label="メニュー"><Icon n="down" size={6} /></Cell></Group>
        <Group $w={213} $gap={2}>
          <Cell $w={7} $tone="orange">=</Cell>
          <Cell $tone="light" aria-label="選択"><Icon n="arrow" size={11} /></Cell>
          <Cell $tone="light" aria-label="範囲"><Icon n="range" size={11} /></Cell>
          {projectTools.map(n => <Cell key={n} aria-label={n}><Icon n={n} size={11} /></Cell>)}
        </Group>
        <Group $w={28} $gap={2}><Cell $tone="dark" aria-label="カラー"><Icon n="palette" size={11} /></Cell><Cell $tone="dark" aria-label="カラーメニュー"><Icon n="down" size={6} /></Cell></Group>
        <Group $w={17}><Cell aria-label="クロスフェード"><Icon n="fade" /></Cell></Group>
        <Group $w={87} $gap={4}><Cell $w={15} aria-label="スナップ"><Icon n="snap" size={11} /></Cell><Picker label="スナップ" value="グリッド" /></Group>
        <Group $w={86}><Picker label="グリッドの種類" value="クオンタイズ値" icon="hash" /></Group>
        <Group $w={141}>
          <Cell $w={15}>Q</Cell>
          <Picker label="クオンタイズ" value="1/8" />
          <Cell $w={16} aria-label="反復"><Icon n="iter" size={11} /></Cell>
          <Cell $w={16} aria-label="スウィング"><Icon n="tri" size={11} /></Cell>
          <Cell $w={15} aria-label="パネル"><Icon n="e" size={10} /></Cell>
        </Group>
        <Group $w={16}><Cell aria-label="整列"><Icon n="align" size={11} /></Cell></Group>
        <Spring />
        <Group $w={16}><Cell aria-label="ミキサー"><Icon n="mixer" size={11} /></Cell></Group>
        <Group $w={63}>
          {['zoneL', 'zoneB', 'zoneR'].map(n => <Cell key={n} $tone="light" aria-label={n}><Icon n={n} size={10} /></Cell>)}
          <Cell $tone="dark" aria-label="ゾーン設定"><Icon n="setup" size={11} /></Cell>
        </Group>
        <Group $w={13}><Cell $tone="dark" aria-label="ツールバー設定"><Icon n="gear" size={9} /></Cell></Group>
      </Toolbar>
      <Toolbar $h={20} $pad="0 2px 6px 4px">
        <Chips>{chips.map(([a, b, w]) => <Chip key={a} $w={w} $warn={b === '未接続'}>{a}<b>{b}</b></Chip>)}</Chips>
        <SquareButton aria-label="ステータス設定"><Icon n="gear" size={9} /></SquareButton>
      </Toolbar>
      <InfoLine>
        <InfoStart />
        <Fields items={projectInfo} />
        <Spring />
        <SquareButton aria-label="情報ライン設定"><Icon n="gear" size={9} /></SquareButton>
      </InfoLine>

      <Workspace>
        <Zone>
          <Tabs>
            <Tab $w={50} $on>Inspector</Tab>
            <Tab $w={44}>Visibility</Tab>
            <Spring />
            <Tab $w={14} aria-label="メニュー"><Icon n="menu" size={7} /></Tab>
          </Tabs>
          <Panel $fill>
            <Inspector>
              <Sections>
                <SectionHead><Icon n="right" size={7} /><span>エクスプレッションマップ</span><SectionIcon><Icon n="bow" size={9} /></SectionIcon></SectionHead>
                <SectionHead><Icon n="right" size={7} /><span>ノートエクスプレッション</span><SectionIcon><Icon n="noteExp" size={9} /></SectionIcon></SectionHead>
                <SectionHead><Icon n="right" size={7} /><span>スケールアシスタント</span><SectionIcon><Icon n="scale" size={9} /></SectionIcon></SectionHead>
                <SectionHead><Icon n="right" size={7} /><span>コードエディット</span><SectionIcon><Icon n="chord" size={10} /></SectionIcon></SectionHead>
                <SectionHead $open><Icon n="down" size={7} /><span>クオンタイズ</span><Icon n="mini" size={7} /><SectionIcon>Q</SectionIcon></SectionHead>
              </Sections>
              <Rows $top={6}>
                <Row><Check /><span>クオンタイズを自動適用</span></Row>
                <Row><Check /><span>感度指定クオンタイズ</span></Row>
                <Param label="クオンタイズの強さ" value="60 %" off />
              </Rows>
              <Rows $top={10}>
                <Param label="グリッドの間隔" value="1/8" list />
                <Param label="連符をクオンタイズ" value="Off" />
                <Param label="スウィング" value="0 %" />
              </Rows>
              <Rows $top={9}>
                <Param label="キャッチ範囲" value="-" />
                <Param label="安全範囲" value="0 Ticks" w={34} />
                <Param label="ラフクオンタイズ" value="0 Ticks" w={34} />
                <Disclosure><Icon n="right" size={5} />グリッドを表示</Disclosure>
              </Rows>
              <Rows $top={10}>
                <ActionButton>ノート長をクオンタイズ</ActionButton>
                <ActionButton>エンドをクオンタイズ</ActionButton>
                <ActionButton>MIDI クオンタイズを固定</ActionButton>
              </Rows>
              <Rows $top={9}>
                <ActionButton>クオンタイズをリセット</ActionButton>
                <ActionButton>適用</ActionButton>
              </Rows>
              <Rule />
              <Sections>
                <SectionHead><Icon n="right" size={7} /><span>移調</span><SerifIcon>T</SerifIcon></SectionHead>
                <SectionHead><Icon n="right" size={7} /><span>長さ</span><SerifIcon>L</SerifIcon></SectionHead>
                <SquareButton aria-label="インスペクター設定"><Icon n="gear" size={9} /></SquareButton>
              </Sections>
            </Inspector>
          </Panel>
          <Tabs $bottom>
            <Tab $w={47}>トラック</Tab>
            <Tab $w={54} $on $bottom>エディター</Tab>
          </Tabs>
        </Zone>

        <Zone>
          <ArrangePanel>
            <TrackList>
              <TrackHead>
                <HeadGroup $w={31} $gap={0}><Cell aria-label="トラックを追加"><Icon n="plus" size={9} /></Cell><Cell aria-label="プリセット"><Icon n="presets" size={10} /></Cell></HeadGroup>
                <Spring />
                <HeadGroup $w={71}><HeadCount>7 / 7</HeadCount><Cell $w={15} $tone="dark" aria-label="フィルター"><Icon n="house" size={10} /></Cell><Cell $w={15} $tone="dark" aria-label="一覧"><Icon n="list" size={10} /></Cell></HeadGroup>
                <HeadGroup $w={16} $gap={6}><Cell aria-label="検索"><Icon n="find" size={9} /></Cell></HeadGroup>
              </TrackHead>
              <Track $h={13}>
                <TrackColor><Icon n="folder" size={10} /></TrackColor>
                <TrackBody><FolderTitle>入出力チャンネル</FolderTitle></TrackBody>
              </Track>
              <Track $h={51}>
                <TrackColor><Icon n="chord" size={10} /></TrackColor>
                <TrackBody>
                  <MS><Mini>m</Mini></MS>
                  <TrackTitle>コードトラック</TrackTitle>
                  <Minis $shift>
                    <Mini aria-label="録音"><Icon n="dot" size={6} /></Mini>
                    <Mini $bg="#259aa6" aria-label="スケール"><Icon n="scale" size={8} /></Mini>
                    <Mini $bg="#7d7fd4" aria-label="ボイシング"><Icon n="blocks" size={8} /></Mini>
                    <MiniText $w={76}>モニターしているトラックを使用</MiniText>
                  </Minis>
                </TrackBody>
              </Track>
              <Track $h={51}>
                <TrackColor><Icon n="note" size={11} /></TrackColor>
                <TrackBody>
                  <MS><Mini $bg="#e08c50" aria-label="テンポを有効化"><Icon n="power" size={7} /></Mini><Mini aria-label="ロック"><Icon n="lockOpen" size={7} /></Mini></MS>
                  <TrackTitle>テンポ<SmallValue $w={31}>132.000</SmallValue><SmallValue $w={13} aria-label="タイムベース"><Icon n="link2" size={9} /></SmallValue><SmallValue $w={30}>ステップ</SmallValue></TrackTitle>
                </TrackBody>
              </Track>
              <Track $h={51}>
                <TrackColor><Icon n="piano" size={11} /><small>1</small></TrackColor>
                <TrackBody>
                  <MS><Mini>m</Mini><Mini>S</Mini></MS>
                  <TrackTitle>ピアノコード確認用</TrackTitle>
                  <Minis $shift>
                    <Mini $w={29} aria-label="録音とモニター"><Icon n="dot" size={6} /><Icon n="speaker" size={7} /></Mini>
                    <Mini $w={29} aria-label="編集"><Icon n="e" size={7} /><Icon n="piano" size={7} /></Mini>
                    <Mini $w={29}><span>R</span><span>W</span></Mini>
                    <Mini aria-label="レーン"><Icon n="bars" size={9} /></Mini>
                  </Minis>
                  <PictureSlot />
                </TrackBody>
              </Track>
              <Track $h={10}>
                <TrackColor><Icon n="wave" size={10} /><small>2</small></TrackColor>
                <TrackBody>
                  <MS><Mini>m</Mini><Mini>S</Mini></MS>
                  <TrackTitle>Audio 01原曲</TrackTitle>
                </TrackBody>
              </Track>
              <TrackFoot><span>-</span><Spring /><Icon n="down" size={6} /><Icon n="gear" size={7} /></TrackFoot>
            </TrackList>
            <Canvas>
              <ArrangeRuler />
              <ArrangeCanvas />
              <HScroll $lead={11} $thumb={18}>
                <Icon n="chevL" size={6} />
                <HScrollEnd><Icon n="chevR" size={6} /><ZoomStrip $w={64}><Icon n="down" size={5} />-<ZoomRange $len={30} defaultValue={50} aria-label="横ズーム" />+</ZoomStrip></HScrollEnd>
              </HScroll>
            </Canvas>
            <VRail>
              <RailButton aria-label="ルーラー表示"><Icon n="down" size={6} /></RailButton>
              <VZoom $h={48}><Icon n="line" size={6} /><ZoomRange $v $len={34} aria-label="波形ズーム" defaultValue={100} /></VZoom>
              <VBar $lead="2px" $thumb={29}><Icon n="chevU" size={6} /><i /><Icon n="chevD" size={6} /></VBar>
              <VZoom $h={68}><Icon n="down" size={5} /><span>-</span><ZoomRange $v $len={34} aria-label="縦ズーム" defaultValue={20} /><span>+</span></VZoom>
            </VRail>
          </ArrangePanel>

          <EditorPanel $active $fill>
            <Toolbar $h={16} $pad="0 2px 0 0">
              <Group $w={31} $gap={0}><Cell aria-label="ソロ"><Icon n="solo" size={11} /></Cell><Cell aria-label="録音"><Icon n="dot" size={9} /></Cell></Group>
              <Group $w={16}><Cell aria-label="ステップ入力"><Icon n="input" size={11} /></Cell></Group>
              <Group $w={31} $gap={52}><Cell aria-label="表示"><Icon n="house" size={9} /></Cell><Cell $tone="dark" aria-label="表示メニュー"><Icon n="down" size={6} /></Cell></Group>
              <Group $w={46} $gap={4}><Cell aria-label="リンク"><Icon n="link" size={11} /></Cell><Cell $tone="light" aria-label="自動スクロール"><Icon n="autoscroll" /></Cell><Cell $tone="dark" aria-label="メニュー"><Icon n="down" size={6} /></Cell></Group>
              <Group $w={16} $gap={3}><Cell aria-label="試聴"><Icon n="feedback" size={11} /></Cell></Group>
              <Group $w={157}>
                <Cell $tone="light" aria-label="選択"><Icon n="arrow" size={11} /></Cell>
                {editorTools.map(n => <Cell key={n} aria-label={n}><Icon n={n} size={11} /></Cell>)}
              </Group>
              <Group $w={102}><Cell $w={15} aria-label="スナップ"><Icon n="snap" size={11} /></Cell><Picker label="スナップの種類" value="グリッド" /><Cell $w={15} $tone="dark" aria-label="ナッジ"><Icon n="nudge" size={11} /></Cell></Group>
              <Group $w={125}>
                <Cell $w={15}>Q</Cell>
                <Picker label="クオンタイズ" value="1/8" />
                <Cell $w={16} aria-label="反復"><Icon n="iter" size={11} /></Cell>
                <Cell $w={15} aria-label="パネル"><Icon n="e" size={10} /></Cell>
              </Group>
              <Group $w={48}><Cell $tone="light" aria-label="パート境界"><Icon n="parts" /></Cell><Cell $tone="dark" aria-label="パート"><Icon n="layers" size={10} /></Cell><Cell $tone="dark" aria-label="パートメニュー"><Icon n="down" size={6} /></Cell></Group>
              <Group $w={78} $gap={5}><Picker label="パート" value="メロディー" /></Group>
              <Group $w={83}><Picker label="カラー" value="ベロシティー" icon="palette" /></Group>
              <Group $w={16}><Cell aria-label="MIDI 入力"><Icon n="keysIn" /></Cell></Group>
              <Spring />
              <Group $w={32}><Cell aria-label="別ウィンドウ"><Icon n="expand" size={9} /></Cell><Cell $tone="dark" aria-label="ゾーン"><Icon n="setup" size={11} /></Cell></Group>
              <Group $w={13}><Cell $tone="dark" aria-label="エディター設定"><Icon n="gear" size={9} /></Cell></Group>
            </Toolbar>
            <EditorInfo>
              <Fields items={editorInfo} accent />
              <Spring />
              <SquareButton aria-label="情報設定"><Icon n="gear" size={9} /></SquareButton>
            </EditorInfo>
            <EditorGrid>
              <Corner /><EditorRuler /><RailButton aria-label="ルーラー"><Icon n="down" size={6} /></RailButton>
              <Keyboard /><PianoRoll />
              <VRail>
                <VBar $lead="47px" $thumb={25}><Icon n="chevU" size={6} /><i /><Icon n="chevD" size={6} /></VBar>
                <VZoom $h={52}><span>-</span><ZoomRange $v $len={36} aria-label="鍵盤ズーム" defaultValue={42} /><span>+</span></VZoom>
              </VRail>
              <Divider />
              <LaneHead><select aria-label="コントローラー"><option>ベロシティー</option></select></LaneHead>
              <VelocityLane />
              <VBar $lead="0" $thumb={0}><Icon n="chevU" size={5} /><i /><Icon n="chevD" size={5} /></VBar>
              <LaneButtons><button aria-label="レーンを追加"><Icon n="plus" size={6} /></button><button aria-label="レーンメニュー"><Icon n="down" size={5} /></button></LaneButtons>
              <HScroll $lead={13} $thumb={22}>
                <Icon n="chevL" size={6} />
                <HScrollEnd><Icon n="chevR" size={6} /><ZoomStrip $w={50}>-<ZoomRange $len={30} defaultValue={50} aria-label="ズーム" />+</ZoomStrip></HScrollEnd>
              </HScroll>
            </EditorGrid>
          </EditorPanel>
          <Tabs $bottom>
            <Tab $w={12} aria-label="閉じる"><Icon n="close" size={8} /></Tab>
            <Tab $w={68}>MixConsole</Tab>
            <Tab $w={66} $on $bottom $active $start>エディター<Icon n="down" size={6} /></Tab>
            <Tab $w={86}>サンプラーコントロール</Tab>
            <Tab $w={58}>コードパッド</Tab>
            <Tab $w={70}>MIDI Remote</Tab>
            <Tab $w={14} aria-label="設定"><Icon n="gear" size={8} /></Tab>
          </Tabs>
        </Zone>

        <Zone>
          <Tabs>
            <Tab $w={34}>VSTi</Tab><Tab $w={40}>メディア</Tab><Tab $w={29}>CR</Tab><Tab $w={40} $on>メーター</Tab>
          </Tabs>
          <MeterPanel $fill>
            <MasterBar><Icon n="right" size={7} />Master<button>CR</button></MasterBar>
            <ScaleStrip>Digital Scale<span>-18 dBFS</span></ScaleStrip>
            <PairButtons><button aria-label="メーター設定"><Icon n="gear" size={7} /></button><button aria-label="リセット"><Icon n="rewind" size={8} /></button></PairButtons>
            <Meter />
            <Readout>
              <dt>最大RMS</dt><dt>最大ピーク</dt><dd>-12.7</dd><dd>1.4</dd>
            </Readout>
          </MeterPanel>
          <Tabs $bottom>
            <Tab $w={48} $on $bottom>マスター</Tab>
            <Tab $w={54}>ラウドネス</Tab>
          </Tabs>
        </Zone>
      </Workspace>

      <Transport>
        <Group $w={16}><Cell aria-label="タイムベース"><Icon n="clock" /></Cell></Group>
        <Group $w={28}><Cell $tone="dark" aria-label="録音モード"><Icon n="dot" size={9} /></Cell><Cell $tone="dark" aria-label="メニュー"><Icon n="down" size={6} /></Cell></Group>
        <Dots />
        <Group $w={28}><Cell $tone="dark" aria-label="オーディオ録音"><Icon n="wave" /></Cell><Cell $tone="dark" aria-label="メニュー"><Icon n="down" size={6} /></Cell></Group>
        <Dots />
        <Group $w={28}><Cell $tone="dark" aria-label="MIDI 録音"><Icon n="palette" size={10} /></Cell><Cell $tone="dark" aria-label="メニュー"><Icon n="down" size={6} /></Cell></Group>
        <Dots />
        <Group $w={24}><Cell>AQ</Cell></Group>
        <Spring />
        <Group $w={94} $gap={11}><Cell $w={15} aria-label="左ロケーター"><Icon n="locL" size={9} /></Cell><TimeInput aria-label="左ロケーター位置" readOnly value="1.  1.  1.    0" /></Group>
        <Group $w={94} $gap={5}><Cell $w={15} aria-label="右ロケーター"><Icon n="locR" size={9} /></Cell><TimeInput aria-label="右ロケーター位置" readOnly value="49.  1.  4. 17" /></Group>
        <Group $w={47}><Cell $tone="light" aria-label="ロック"><Icon n="lock" size={10} /></Cell><Cell aria-label="パンチイン"><Icon n="punchIn" size={9} /></Cell><Cell aria-label="パンチアウト"><Icon n="punchOut" size={9} /></Cell></Group>
        <Dots />
        <TransportKeys>
          <TransportKey aria-label="サイクル"><Icon n="cycle" /></TransportKey>
          <TransportKey $on aria-label="停止"><Icon n="stop" size={11} /></TransportKey>
          <TransportKey aria-label="再生"><Icon n="play" size={11} /></TransportKey>
          <TransportKey aria-label="録音"><Icon n="rec" size={11} /></TransportKey>
        </TransportKeys>
        <Dots />
        <Group $w={24}><FadedCell aria-label="レトロスペクティブ録音" disabled><Icon n="input" size={10} /></FadedCell></Group>
        <Group $w={94}><Cell $w={15} $tone="dark" aria-label="表示形式"><Icon n="note" size={10} /></Cell><TimeInput aria-label="現在位置" readOnly value="5.  1.  1. 33" /></Group>
        <Dots />
        <Group $w={68}><Cell $w={15} $tone="light" aria-label="テンポトラック"><Icon n="tempo" size={11} /></Cell><TimeInput $small aria-label="テンポ" readOnly value="132.000" /><Cell $w={12} $tone="dark" aria-label="テンポを増減"><Icon n="updown" size={8} /></Cell></Group>
        <Dots />
        <Spring />
        <Group $w={32}><Cell $tone="light" aria-label="メトロノーム"><Icon n="metro" size={10} /></Cell><Cell aria-label="メトロノーム設定"><Icon n="e" size={10} /></Cell></Group>
        <Dots />
        <LevelMeter><i /><i /><i /><i /></LevelMeter>
        <Dots />
        <Group $w={13}><Cell $tone="dark" aria-label="トランスポート設定"><Icon n="gear" size={9} /></Cell></Group>
      </Transport>

      <Taskbar>
        <Weather>
          <svg width="16" height="16" viewBox="0 0 16 16" aria-hidden="true"><path d="M10 0c8 4 7 14-1 15.500-4 .5-7-2-8-5 7 2 11-3 9-10.500z" fill="#f5a52c" /></svg>
          <span>19°C<small>晴れ</small></span>
        </Weather>
        <Apps>
          <AppButton aria-label="スタート"><Svg><path d="M0 0h7.500v7.500H0zM8.500 0H16v7.500H8.500zM0 8.500h7.500V16H0zM8.500 8.500H16V16H8.500z" fill="#3fb8f5" /></Svg></AppButton>
          <SearchPill><Icon n="find" size={10} />検索</SearchPill>
          {appIcons.map(([label, art, state]) => (
            <AppButton key={label} aria-label={label} $on={state === 'on'} $run={state === 'run'}><Svg>{art}</Svg></AppButton>
          ))}
        </Apps>
        <Tray>
          <Icon n="chevU" size={8} />
          <svg width="11" height="11" viewBox="0 0 16 16" aria-hidden="true"><path d="M4 13a4 4 0 0 1 0-7c2-4 8-3 8.500 1C16 7 16 13 12 13z" fill="#f0eef0" /></svg>
          <svg width="11" height="11" viewBox="0 0 16 16" aria-hidden="true"><path d="M13 6A6 6 0 0 0 2 6M2 2v4h4M2 10a6 6 0 0 0 6 4" fill="none" stroke="#f0eef0" strokeWidth="1.600" /><circle cx="12" cy="11" r="4" fill="#2b8ae0" /></svg>
          <Ime>あ</Ime>
          <svg width="12" height="12" viewBox="0 0 16 16" aria-hidden="true"><path d="M2 3h9v8H2zM5 14h5M12 5h3v4h-3M13.500 9v5" fill="none" stroke="#f0eef0" strokeWidth="1.500" /></svg>
          <Icon n="speaker" size={11} />
          <Clock>20:42<br />2022/10/15</Clock>
          <Badge>18</Badge>
        </Tray>
      </Taskbar>
    </Page>
  );
}
